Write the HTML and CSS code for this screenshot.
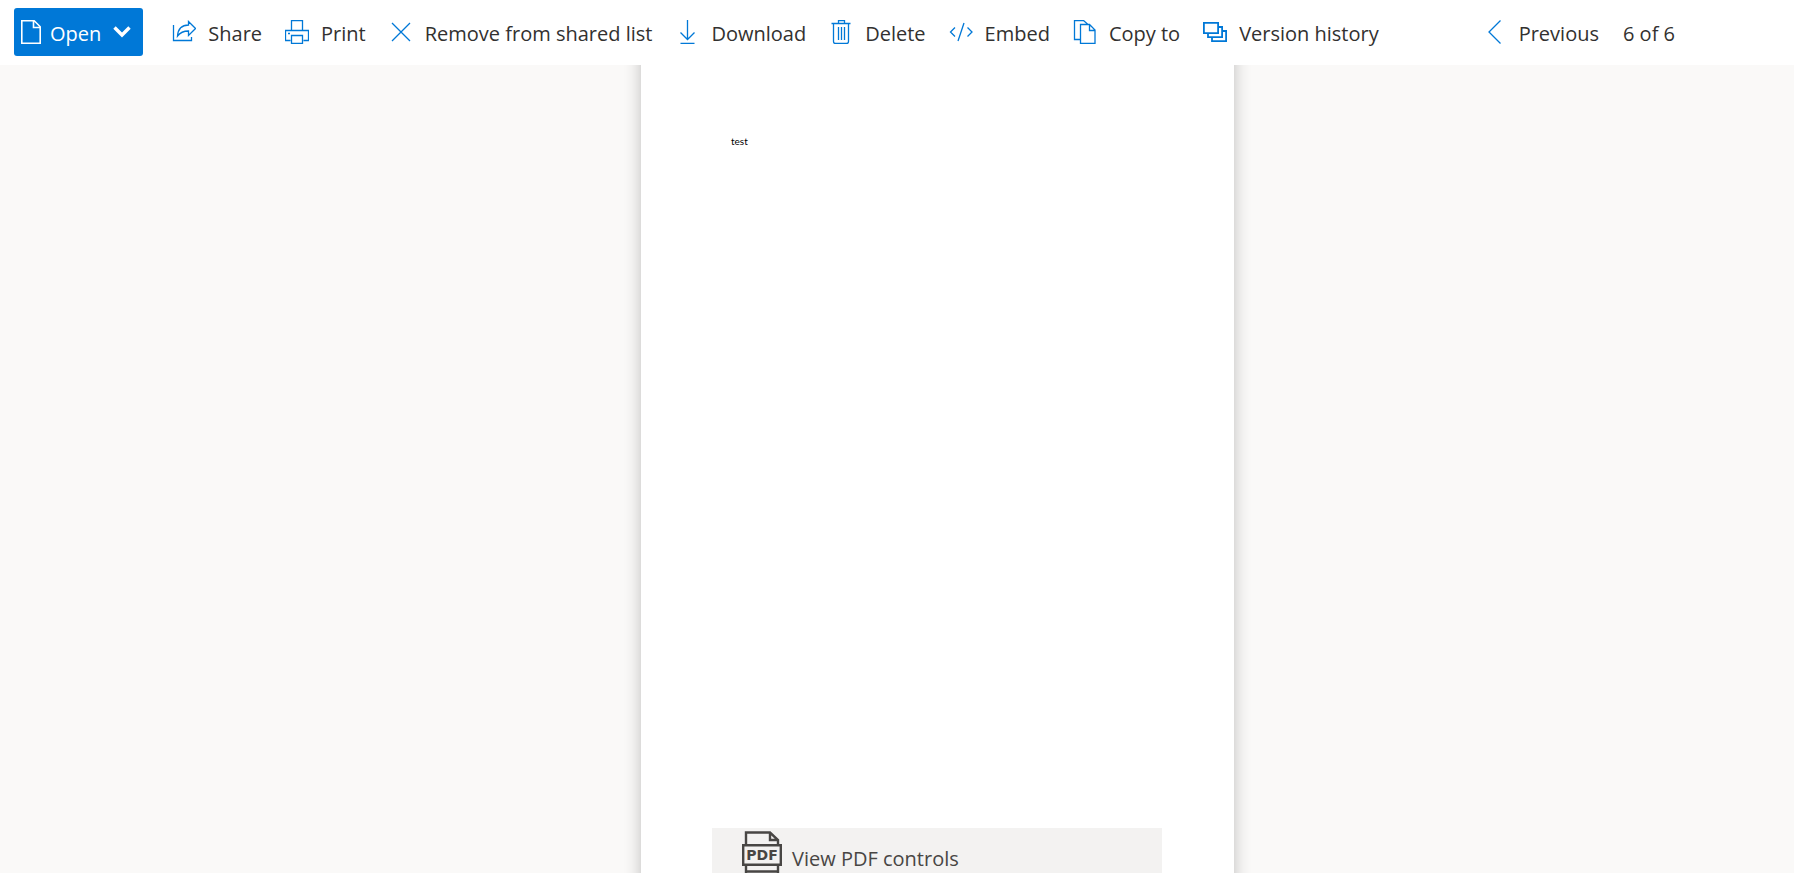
FILE: index.html
```html
<!DOCTYPE html>
<html lang="en">
<head>
  <meta charset="UTF-8">
  <meta name="viewport" content="width=device-width, initial-scale=1.0">
  <title>Document viewer</title>
  <link rel="stylesheet" href="styles.css">
</head>
<body>
  <header class="toolbar">
    <button class="open-button" type="button">
      <svg class="icon" viewBox="0 0 24 24"><path d="M2.8 .8h12.4l6 6v16.4H2.8zM14.5 1v6.5H21" stroke-width="1.6"/></svg>
      <span>Open</span>
      <svg class="chevron" viewBox="0 0 18 12"><path d="M1.5 1.5L9 9l7.5-7.5" stroke-width="3.4"/></svg>
    </button>

    <div class="commands">
      <button class="command" type="button">
        <svg class="icon" viewBox="0 0 24 24"><path d="M1.500 5v15.500h18V17M16.500 1.500l7 7-7 7v-4.500c-4.500 0-8 1-11 5 .5-6.500 4-11 11-11z"/></svg>
        <span>Share</span>
      </button>
      <button class="command" type="button">
        <svg class="icon" viewBox="0 0 24 24"><path d="M6.500 10.500v-10h11v10M5.500 20.500h-5v-10h23v10h-5M6.500 15.500h11v8h-11zM3 13.500h2"/></svg>
        <span>Print</span>
      </button>
      <button class="command" type="button">
        <svg class="icon" viewBox="0 0 24 24"><path d="M3 3l18 18M21 3L3 21"/></svg>
        <span>Remove from shared list</span>
      </button>
      <button class="command" type="button">
        <svg class="icon" viewBox="0 0 24 24"><path d="M12.500 0v19M5.500 12.500l7 7 7-7M5.500 23.500h14"/></svg>
        <span>Download</span>
      </button>
      <button class="command" type="button">
        <svg class="icon" viewBox="0 0 24 24"><path d="M2.500 3.500h19M9.500 3V.500h6V3M4.500 3.500v18q0 2 2 2h11q2 0 2-2v-18M9.500 7v13M12.500 7v13M15.500 7v13"/></svg>
        <span>Delete</span>
      </button>
      <button class="command" type="button">
        <svg class="icon" viewBox="0 0 24 24"><path d="M6 7.500l-4.500 4.500L6 16.500M18.500 7.500l4.500 4.500-4.500 4.500M15 3L9 21"/></svg>
        <span>Embed</span>
      </button>
      <button class="command" type="button">
        <svg class="icon" viewBox="0 0 24 24"><path d="M7 19.500H1.500V.500h9L15 4.500M7.500 4.500h9l5.500 5.500v13.500H7.500zM16.500 5v5.500H22"/></svg>
        <span>Copy to</span>
      </button>
      <button class="command" type="button">
        <svg class="icon" viewBox="0 0 24 24"><path d="M.9 2.900h14.200v10.200H.9zM5 13v4.100h14.100V7H15M9 17v4.100h14.100V11H19" stroke-width="1.8"/></svg>
        <span>Version history</span>
      </button>
    </div>

    <div class="pager">
      <button class="command" type="button">
        <svg class="icon" viewBox="0 0 24 24"><path d="M17.500 .500L6 12l11.500 11.500"/></svg>
        <span>Previous</span>
      </button>
      <span>6 of 6</span>
    </div>
  </header>

  <main class="viewer">
    <article class="page">
      <p class="page-text">test</p>
      <button class="pdf-controls" type="button">
        <svg class="pdf-icon" viewBox="0 0 40 48">
          <path d="M4 14V1.500h24L36 9v5M28 1.500V9h8M1.200 14.200h37.600v19.600H1.200zM4 34v12h32V34M4 40.500h32"/>
          <text x="20" y="29" text-anchor="middle">PDF</text>
        </svg>
        <span>View PDF controls</span>
      </button>
    </article>
  </main>
</body>
</html>
```

FILE: styles.css
```css
body {
  margin: 0;
  height: 100vh;
  display: flex;
  flex-direction: column;
  overflow: hidden;
  background-color: #faf9f8;
  font-family: "Open Sans", "Noto Sans", sans-serif;
  font-size: 20px;
  color: #323130;
}

button {
  display: flex;
  align-items: center;
  padding: 0;
  border: none;
  background: none;
  font: inherit;
  color: inherit;
  white-space: nowrap;
  cursor: pointer;
}

svg {
  flex: none;
  fill: none;
  stroke: currentColor;
}

.toolbar {
  display: flex;
  align-items: center;
  height: 65px;
  flex: none;
  box-sizing: border-box;
  padding: 0 119px 1px 14px;
  background-color: #fff;
}

.toolbar span {
  padding-top: 3px;
}

.open-button {
  height: 48px;
  padding: 0 12px 0 5px;
  gap: 7px;
  border-radius: 3px;
  background-color: #0078d7;
  color: #fff;
}

.icon {
  width: 24px;
  height: 24px;
}

.chevron {
  width: 18px;
  height: 12px;
  margin-left: 5px;
}

.commands {
  display: flex;
  gap: 23px;
  margin-left: 29px;
}

.command {
  gap: 12px;
}

.command .icon {
  color: #0078d7;
  stroke-width: 1.3px;
}

.pager {
  display: flex;
  align-items: center;
  gap: 24px;
  margin-left: auto;
}

.viewer {
  flex: 1;
  min-height: 0;
  display: flex;
  justify-content: center;
  padding-left: 81px;
  overflow: hidden;
}

/* runs past the viewer so the shadow only shows at the sides */
.page {
  width: 593px;
  margin: -20px 0;
  padding: 20px 0;
  display: flex;
  flex-direction: column;
  align-items: flex-start;
  background-color: #fff;
  box-shadow: 0 0 16px rgba(0, 0, 0, 0.24);
}

.page-text {
  margin: 70px 90px;
  font-family: Lato, sans-serif;
  font-size: 10px;
  line-height: 12px;
  color: #000;
}

.pdf-controls {
  width: 450px;
  height: 45px;
  margin: auto 0 0 71px;
  padding: 3px 30px 0;
  gap: 10px;
  align-items: flex-start;
  background-color: #f3f2f1;
  color: #484644;
  line-height: 56px;
  overflow: hidden;
}

.pdf-icon {
  width: 40px;
  height: 48px;
  stroke-width: 2.4px;
}

.pdf-icon text {
  fill: currentColor;
  stroke: none;
  font-family: "DejaVu Sans", sans-serif;
  font-size: 14px;
  font-weight: 700;
}
```
